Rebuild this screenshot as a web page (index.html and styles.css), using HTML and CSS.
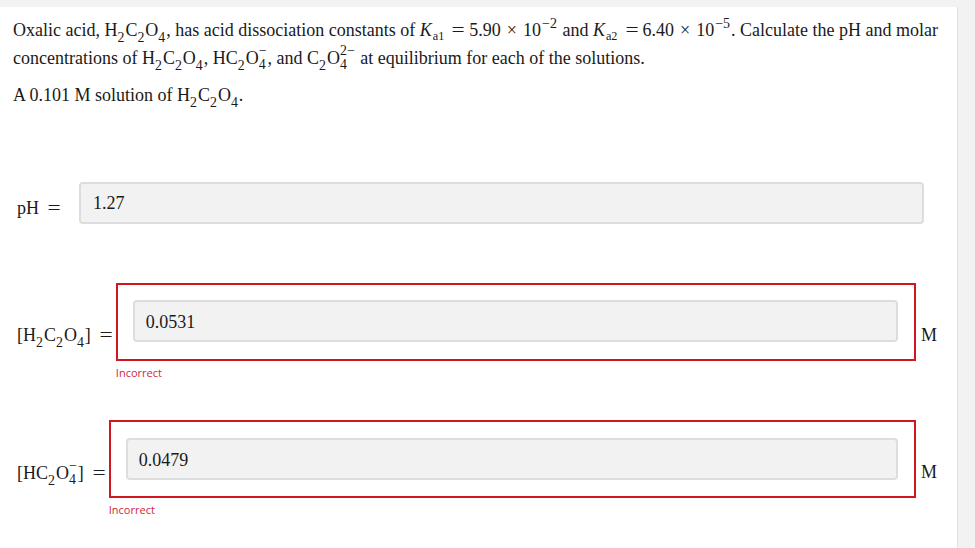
FILE: index.html
```html
<!DOCTYPE html>
<html>
<head>
<meta charset="utf-8">
<link rel="stylesheet" href="styles.css">
</head>
<body>
<div class="panel">
  <p class="q">Oxalic acid, H<sub>2</sub>C<sub>2</sub>O<sub>4</sub>, has acid dissociation constants of <i>K</i><sub class="ka">a1</sub><span class="eq">=</span>5.90<span class="x">×</span>10<sup>−2</sup> and <i>K</i><sub class="ka">a2</sub><span class="eq">=</span>6.40<span class="x">×</span>10<sup>−5</sup>. Calculate the pH and molar<br>concentrations of H<sub>2</sub>C<sub>2</sub>O<sub>4</sub>, HC<sub>2</sub>O<span class="ss"><span>−</span><span>4</span></span>, and C<sub>2</sub>O<span class="ss"><span>2−</span><span>4</span></span> at equilibrium for each of the solutions.</p>
  <p class="q q2">A 0.101 M solution of H<sub>2</sub>C<sub>2</sub>O<sub>4</sub>.</p>

  <div class="row row-ph">
    <span class="label label-ph">pH<span class="eq eq2">=</span></span>
    <div class="input input-ph">1.27</div>
  </div>

  <div class="row row-a">
    <span class="label">[H<sub>2</sub>C<sub>2</sub>O<sub>4</sub>]<span class="eq eq2">=</span></span>
    <div class="field">
      <div class="wrong">
        <div class="input">0.0531</div>
      </div>
      <div class="feedback">Incorrect</div>
    </div>
    <span class="unit">M</span>
  </div>

  <div class="row row-b">
    <span class="label">[HC<sub>2</sub>O<span class="ss"><span>−</span><span>4</span></span>]<span class="eq eq2">=</span></span>
    <div class="field">
      <div class="wrong">
        <div class="input">0.0479</div>
      </div>
      <div class="feedback">Incorrect</div>
    </div>
    <span class="unit">M</span>
  </div>
</div>
</body>
</html>
```

FILE: styles.css
```css
html, body {
  margin: 0;
  padding: 0;
  background: #f2f2f2;
}
body {
  font-family: "Liberation Serif", "Times New Roman", serif;
  font-size: 18px;
  color: #1a1a1a;
}
.panel {
  margin-top: 7px;
  width: 958px;
  height: 541px;
  box-sizing: border-box;
  background: #fff;
  border-right: 1px solid #e0e0e0;
  padding: 10px 13px 0 13px;
  overflow: hidden;
}
.q {
  margin: 0;
  line-height: 27px;
  white-space: nowrap;
}
.q2 {
  margin-top: 10px;
}
sub, sup {
  font-size: 0.77em;
  line-height: 0;
}
sub {
  vertical-align: -0.42em;
  margin-right: 1px;
}
sup {
  font-size: 0.78em;
  vertical-align: 0.55em;
  margin-left: 1px;
  margin-right: 1px;
}
sub.ka {
  font-size: 0.68em;
  vertical-align: -0.35em;
  margin-left: 1px;
  margin-right: 0;
}
.eq {
  display: inline-block;
  width: 12px;
  text-align: center;
  transform: scaleX(1.3);
  margin: 0 5px 0 8px;
}
.eq2 {
  margin: 0 4px 0 9px;
}
.x {
  margin: 0 6px;
}
.ss {
  display: inline-block;
  font-size: 0.77em;
  line-height: 1;
  vertical-align: -5px;
  margin-right: 1px;
}
.ss > span {
  display: block;
}
.row {
  display: flex;
  align-items: flex-start;
  margin-left: 4px;
  margin-right: 7px;
}
.row-ph {
  margin-top: 73px;
  margin-right: 20px;
}
.row-a {
  margin-top: 59px;
}
.row-b {
  margin-top: 40px;
}
.label {
  line-height: 27px;
  margin-top: 39px;
  white-space: nowrap;
}
.label-ph {
  margin-top: 13px;
  margin-right: 15px;
}
.field {
  flex: 1;
  margin-left: 0;
}
.wrong {
  border: 2px solid #d0161f;
  padding: 15px 16px 17px 15px;
}
.row-b .wrong {
  padding: 16px 16px 16px 15px;
}
.input {
  height: 42px;
  box-sizing: border-box;
  background: #f2f2f2;
  border: 2px solid #dddddd;
  border-radius: 4px;
  padding: 0 11px;
  line-height: 40px;
  color: #1a1a1a;
}
.input-ph {
  flex: 1;
  line-height: 38px;
  padding-left: 12px;
}
.feedback {
  font-family: "Open Sans", "Liberation Sans", sans-serif;
  font-size: 11px;
  line-height: 15px;
  color: #cf1f3f;
  margin-top: 4px;
}
.unit {
  line-height: 27px;
  margin-top: 39px;
  margin-left: 5px;
}
```
